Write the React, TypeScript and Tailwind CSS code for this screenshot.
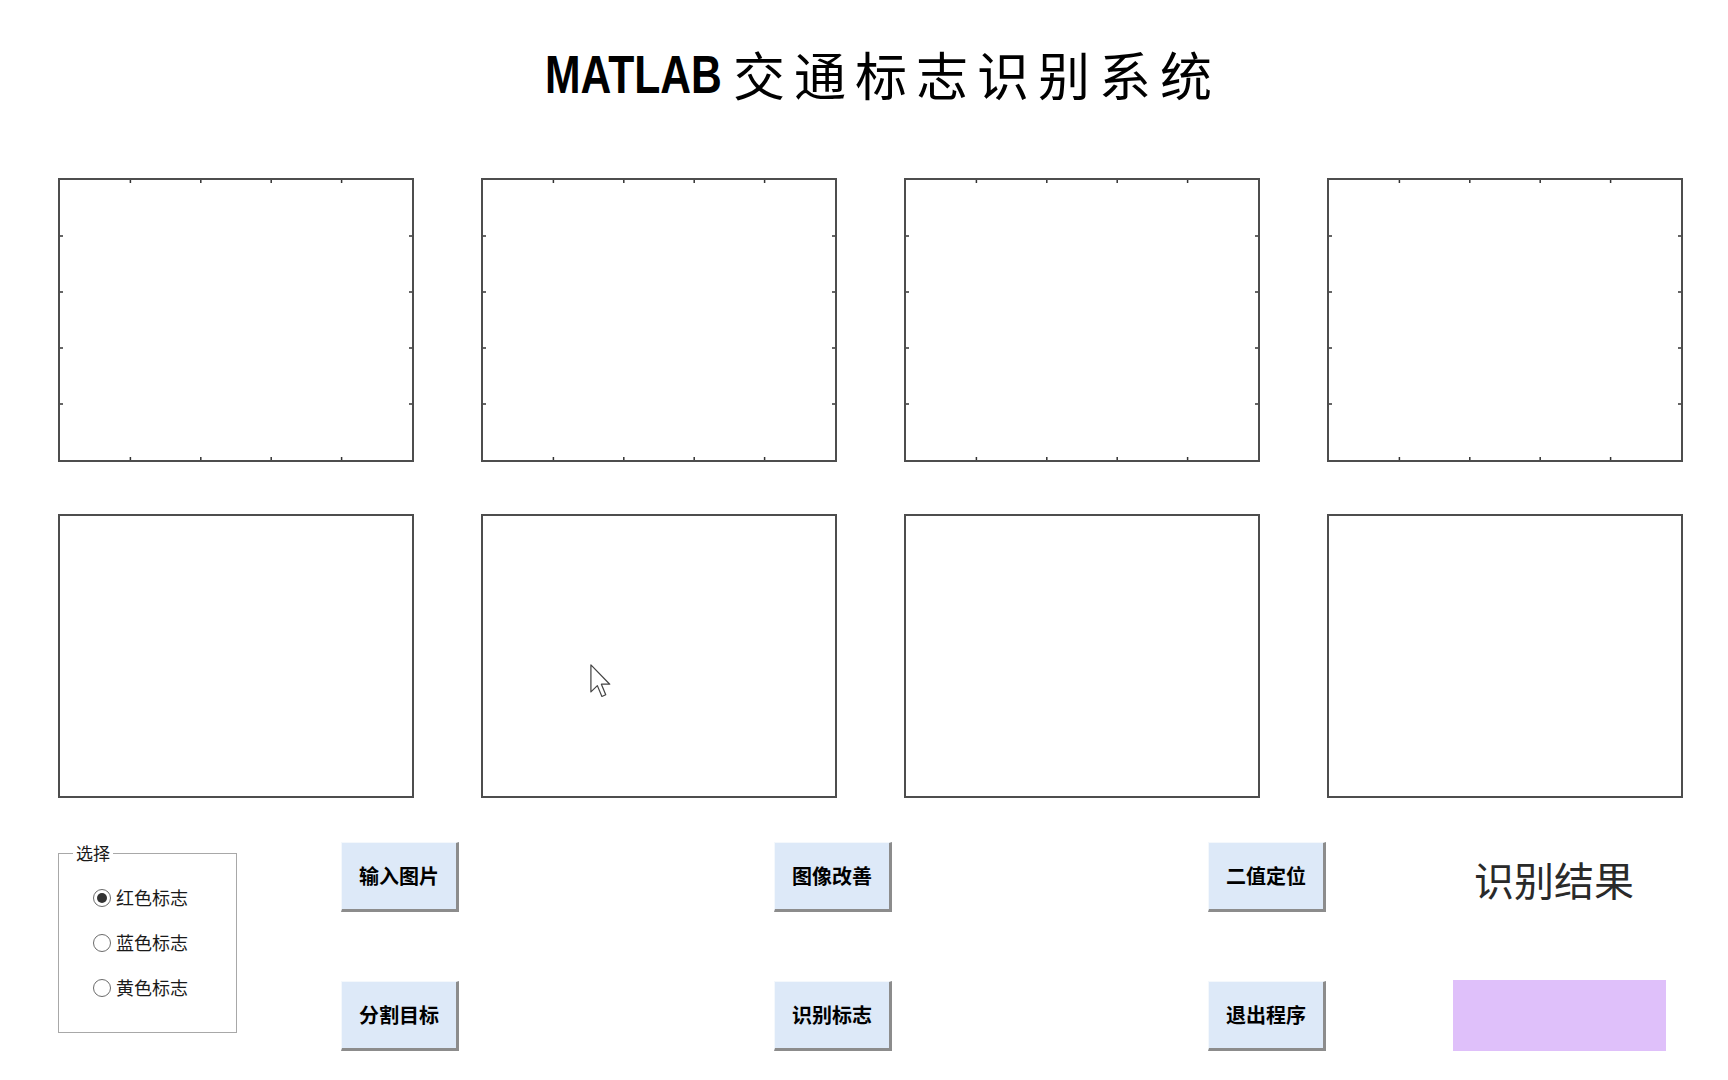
import React from "react";

const CJK = "font-['Noto_Sans_CJK_SC','Noto_Sans',sans-serif]";

function Axes() {
  const w = 352;
  const h = 280;
  const xs = [1, 2, 3, 4].map((k) => (w * k) / 5);
  const ys = [1, 2, 3, 4].map((k) => (h * k) / 5);
  return (
    <svg className="absolute inset-0" width={w} height={h} viewBox={`0 0 ${w} ${h}`}>
      <g stroke="#333" strokeWidth="1.5">
        {xs.map((x) => (
          <React.Fragment key={"x" + x}>
            <line x1={x} y1={0} x2={x} y2={3} />
            <line x1={x} y1={h} x2={x} y2={h - 3} />
          </React.Fragment>
        ))}
        {ys.map((y) => (
          <React.Fragment key={"y" + y}>
            <line x1={0} y1={y} x2={3} y2={y} />
            <line x1={w} y1={y} x2={w - 3} y2={y} />
          </React.Fragment>
        ))}
      </g>
    </svg>
  );
}

function Plot({ ticks }: { ticks?: boolean }) {
  return (
    <div className="relative h-[284px] w-[356px] border-2 border-[#4d4d4d] bg-white">
      {ticks && <Axes />}
    </div>
  );
}

function Btn({ label }: { label: string }) {
  return (
    <button
      className={`flex h-[70px] w-[118px] items-center justify-center border-t border-l border-t-[#f4f8fc] border-l-[#f4f8fc] border-r-[3px] border-b-[3px] border-r-[#8c8c8c] border-b-[#8c8c8c] bg-[#dde9f8] text-[20px] font-bold text-black ${CJK}`}
    >
      {label}
    </button>
  );
}

function Radio({ label, checked }: { label: string; checked?: boolean }) {
  return (
    <div className="flex h-[45px] items-center pl-[34px]">
      <span className="flex h-[18px] w-[18px] items-center justify-center rounded-full border border-[#6b6b6b] bg-white">
        {checked && <span className="h-[10px] w-[10px] rounded-full bg-[#333]" />}
      </span>
      <span className={`ml-[5px] text-[18px] text-[#1a1a1a] ${CJK}`}>{label}</span>
    </div>
  );
}

export default function App() {
  return (
    <div className="relative h-[1080px] w-[1728px] overflow-hidden bg-white">
      {/* Title */}
      <h1 className="mt-[38px] flex h-[72px] items-center pl-[545px] text-black">
        <span className="mr-[-48px] inline-block origin-left scale-x-[0.79] font-['Liberation_Sans',Arial,sans-serif] text-[54px] font-bold leading-none">
          MATLAB
        </span>
        <span className={`ml-[12px] text-[52px] font-normal leading-none tracking-[9px] ${CJK}`}>
          交通标志识别系统
        </span>
      </h1>

      {/* Plots */}
      <div className="mt-[68px] grid grid-cols-[repeat(4,356px)] gap-x-[67px] gap-y-[52px] pl-[58px]">
        <Plot ticks />
        <Plot ticks />
        <Plot ticks />
        <Plot ticks />
        <Plot />
        <Plot />
        <Plot />
        <Plot />
      </div>

      {/* Controls */}
      <div className="mt-[44px] flex items-start pl-[58px]">
        <fieldset className="h-[191px] w-[179px] border border-[#a8a8a8]">
          <legend className={`ml-[14px] px-[3px] text-[17px] leading-[22px] text-[#1a1a1a] ${CJK}`}>选择</legend>
          <div className="pt-[11px]">
            <Radio label="红色标志" checked />
            <Radio label="蓝色标志" />
            <Radio label="黄色标志" />
          </div>
        </fieldset>

        <div className="ml-[104px] flex flex-col gap-[69px]">
          <Btn label="输入图片" />
          <Btn label="分割目标" />
        </div>
        <div className="ml-[315px] flex flex-col gap-[69px]">
          <Btn label="图像改善" />
          <Btn label="识别标志" />
        </div>
        <div className="ml-[316px] flex flex-col gap-[69px]">
          <Btn label="二值定位" />
          <Btn label="退出程序" />
        </div>

        <div className="ml-[127px] flex w-[213px] flex-col">
          <div className={`flex h-[70px] items-center pl-[21px] pt-[4px] text-[40px] font-normal text-[#2a2a2a] ${CJK}`}>
            识别结果
          </div>
          <div className="mt-[68px] h-[71px] w-[213px] bg-[#dfc0fa]" />
        </div>
      </div>

      {/* Mouse cursor */}
      <svg
        className="absolute left-[590px] top-[664px]"
        width="21"
        height="34"
        viewBox="0 0 12 19.5"
      >
        <path
          d="M0.5 0.5 L0.5 16 L4.2 12.4 L6.8 18.6 L9 17.6 L6.5 11.6 L11.3 11.6 Z"
          fill="#fff"
          stroke="#444"
          strokeWidth="0.7"
          strokeLinejoin="round"
        />
      </svg>
    </div>
  );
}
